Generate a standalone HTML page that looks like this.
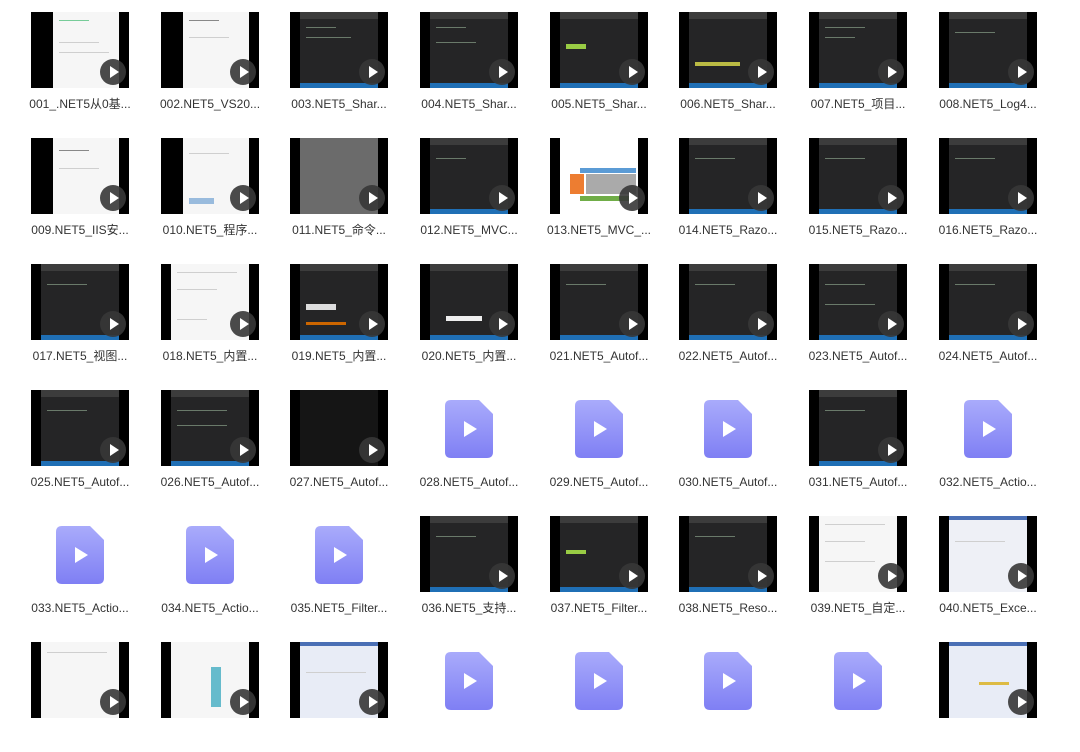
<!DOCTYPE html>
<html><head><meta charset="utf-8"><style>
body{margin:0;width:1080px;height:709px;background:#fff;overflow:hidden;position:relative;font-family:"Liberation Sans","Noto Sans CJK SC",sans-serif}
.c{position:absolute;width:98px;height:110px}
.t{position:absolute;left:0;top:0;width:98px;height:76px;background:#000;overflow:hidden}
.t .in{position:absolute;top:0;bottom:0;left:10px;right:10px}
.d .in{background:#252526}
.d .in:before{content:"";position:absolute;left:0;right:0;top:0;height:7px;background:#3c3c3c}
.d .in:after{content:"";position:absolute;left:0;right:0;bottom:0;height:5px;background:#1f6fb5}
.d .ln{position:absolute;left:6px;height:1px;background:#6a7a6a}
.l .in{background:#f6f6f6;left:22px}
.l .ln{position:absolute;left:6px;height:1px;background:#cfcfcf}
.g .in{background:#6b6b6b}
.k .in{background:#151515}
.p{position:absolute;left:69px;top:47px;width:26px;height:26px;border-radius:50%;background:rgba(55,55,55,.9)}
.p:after{content:"";position:absolute;left:10px;top:7px;border-left:9px solid #fff;border-top:6px solid transparent;border-bottom:6px solid transparent}
.i{position:absolute;left:25px;top:10px;width:48px;height:58px}
.lb{position:absolute;left:-20px;width:138px;top:84px;text-align:center;font-size:12px;color:#333;line-height:16px;white-space:nowrap}
</style></head><body>
<svg width="0" height="0" style="position:absolute"><defs><linearGradient id="gr" x1="0" y1="0" x2="0" y2="1"><stop offset="0" stop-color="#a9abfb"/><stop offset="1" stop-color="#7f7ff4"/></linearGradient></defs></svg>

<!-- row 1 -->
<div class="c" style="left:31px;top:12px"><div class="t l"><div class="in"><div class="ln" style="top:8px;width:30px;background:#7c9"></div><div class="ln" style="top:30px;width:40px"></div><div class="ln" style="top:40px;width:50px"></div></div><div class="p"></div></div><div class="lb">001_.NET5从0基...</div></div>
<div class="c" style="left:161px;top:12px"><div class="t l"><div class="in"><div class="ln" style="top:8px;width:30px;background:#888"></div><div class="ln" style="top:25px;width:40px"></div></div><div class="p"></div></div><div class="lb">002.NET5_VS20...</div></div>
<div class="c" style="left:290px;top:12px"><div class="t d"><div class="in"><div class="ln" style="top:15px;width:30px"></div><div class="ln" style="top:25px;width:45px"></div></div><div class="p"></div></div><div class="lb">003.NET5_Shar...</div></div>
<div class="c" style="left:420px;top:12px"><div class="t d"><div class="in"><div class="ln" style="top:15px;width:30px"></div><div class="ln" style="top:30px;width:40px"></div></div><div class="p"></div></div><div class="lb">004.NET5_Shar...</div></div>
<div class="c" style="left:550px;top:12px"><div class="t d"><div class="in"><div class="ln" style="top:32px;width:20px;height:5px;background:#9c4"></div></div><div class="p"></div></div><div class="lb">005.NET5_Shar...</div></div>
<div class="c" style="left:679px;top:12px"><div class="t d"><div class="in"><div class="ln" style="top:50px;width:45px;height:4px;background:#bb4"></div></div><div class="p"></div></div><div class="lb">006.NET5_Shar...</div></div>
<div class="c" style="left:809px;top:12px"><div class="t d"><div class="in"><div class="ln" style="top:15px;width:40px"></div><div class="ln" style="top:25px;width:30px"></div></div><div class="p"></div></div><div class="lb">007.NET5_项目...</div></div>
<div class="c" style="left:939px;top:12px"><div class="t d"><div class="in"><div class="ln" style="top:20px;width:40px"></div></div><div class="p"></div></div><div class="lb">008.NET5_Log4...</div></div>

<!-- row 2 -->
<div class="c" style="left:31px;top:138px"><div class="t l"><div class="in"><div class="ln" style="top:12px;width:30px;background:#888"></div><div class="ln" style="top:30px;width:40px"></div></div><div class="p"></div></div><div class="lb">009.NET5_IIS安...</div></div>
<div class="c" style="left:161px;top:138px"><div class="t l"><div class="in"><div class="ln" style="top:15px;width:40px"></div><div class="ln" style="top:60px;width:25px;height:6px;background:#9bd"></div></div><div class="p"></div></div><div class="lb">010.NET5_程序...</div></div>
<div class="c" style="left:290px;top:138px"><div class="t g"><div class="in"></div><div class="p"></div></div><div class="lb">011.NET5_命令...</div></div>
<div class="c" style="left:420px;top:138px"><div class="t d"><div class="in"><div class="ln" style="top:20px;width:30px"></div></div><div class="p"></div></div><div class="lb">012.NET5_MVC...</div></div>
<div class="c" style="left:550px;top:138px"><div class="t l"><div class="in" style="left:10px;background:#fff"><div class="ln" style="top:30px;left:20px;width:56px;height:5px;background:#5b9bd5"></div><div class="ln" style="top:36px;left:10px;width:14px;height:20px;background:#ed7d31"></div><div class="ln" style="top:36px;left:26px;width:50px;height:20px;background:#aaa"></div><div class="ln" style="top:58px;left:20px;width:56px;height:5px;background:#70ad47"></div></div><div class="p"></div></div><div class="lb">013.NET5_MVC_...</div></div>
<div class="c" style="left:679px;top:138px"><div class="t d"><div class="in"><div class="ln" style="top:20px;width:40px"></div></div><div class="p"></div></div><div class="lb">014.NET5_Razo...</div></div>
<div class="c" style="left:809px;top:138px"><div class="t d"><div class="in"><div class="ln" style="top:20px;width:40px"></div></div><div class="p"></div></div><div class="lb">015.NET5_Razo...</div></div>
<div class="c" style="left:939px;top:138px"><div class="t d"><div class="in"><div class="ln" style="top:20px;width:40px"></div></div><div class="p"></div></div><div class="lb">016.NET5_Razo...</div></div>

<!-- row 3 -->
<div class="c" style="left:31px;top:264px"><div class="t d"><div class="in"><div class="ln" style="top:20px;width:40px"></div></div><div class="p"></div></div><div class="lb">017.NET5_视图...</div></div>
<div class="c" style="left:161px;top:264px"><div class="t l"><div class="in" style="left:10px"><div class="ln" style="top:8px;width:60px"></div><div class="ln" style="top:25px;width:40px"></div><div class="ln" style="top:55px;width:30px"></div></div><div class="p"></div></div><div class="lb">018.NET5_内置...</div></div>
<div class="c" style="left:290px;top:264px"><div class="t d"><div class="in"><div class="ln" style="top:40px;width:30px;height:6px;background:#ddd"></div><div class="ln" style="top:58px;width:40px;height:3px;background:#c60"></div></div><div class="p"></div></div><div class="lb">019.NET5_内置...</div></div>
<div class="c" style="left:420px;top:264px"><div class="t d"><div class="in"><div class="ln" style="top:52px;left:16px;width:36px;height:5px;background:#eee"></div></div><div class="p"></div></div><div class="lb">020.NET5_内置...</div></div>
<div class="c" style="left:550px;top:264px"><div class="t d"><div class="in"><div class="ln" style="top:20px;width:40px"></div></div><div class="p"></div></div><div class="lb">021.NET5_Autof...</div></div>
<div class="c" style="left:679px;top:264px"><div class="t d"><div class="in"><div class="ln" style="top:20px;width:40px"></div></div><div class="p"></div></div><div class="lb">022.NET5_Autof...</div></div>
<div class="c" style="left:809px;top:264px"><div class="t d"><div class="in"><div class="ln" style="top:20px;width:40px"></div><div class="ln" style="top:40px;width:50px"></div></div><div class="p"></div></div><div class="lb">023.NET5_Autof...</div></div>
<div class="c" style="left:939px;top:264px"><div class="t d"><div class="in"><div class="ln" style="top:20px;width:40px"></div></div><div class="p"></div></div><div class="lb">024.NET5_Autof...</div></div>

<!-- row 4 -->
<div class="c" style="left:31px;top:390px"><div class="t d"><div class="in"><div class="ln" style="top:20px;width:40px"></div></div><div class="p"></div></div><div class="lb">025.NET5_Autof...</div></div>
<div class="c" style="left:161px;top:390px"><div class="t d"><div class="in"><div class="ln" style="top:20px;width:50px"></div><div class="ln" style="top:35px;width:50px"></div></div><div class="p"></div></div><div class="lb">026.NET5_Autof...</div></div>
<div class="c" style="left:290px;top:390px"><div class="t k"><div class="in"></div><div class="p"></div></div><div class="lb">027.NET5_Autof...</div></div>
<div class="c" style="left:420px;top:390px"><svg class="i" viewBox="0 0 48 58"><path d="M6 0H34L48 14V52Q48 58 42 58H6Q0 58 0 52V6Q0 0 6 0Z" fill="url(#gr)"/><path d="M19 21L32 29L19 37Z" fill="#fff"/></svg><div class="lb">028.NET5_Autof...</div></div>
<div class="c" style="left:550px;top:390px"><svg class="i" viewBox="0 0 48 58"><path d="M6 0H34L48 14V52Q48 58 42 58H6Q0 58 0 52V6Q0 0 6 0Z" fill="url(#gr)"/><path d="M19 21L32 29L19 37Z" fill="#fff"/></svg><div class="lb">029.NET5_Autof...</div></div>
<div class="c" style="left:679px;top:390px"><svg class="i" viewBox="0 0 48 58"><path d="M6 0H34L48 14V52Q48 58 42 58H6Q0 58 0 52V6Q0 0 6 0Z" fill="url(#gr)"/><path d="M19 21L32 29L19 37Z" fill="#fff"/></svg><div class="lb">030.NET5_Autof...</div></div>
<div class="c" style="left:809px;top:390px"><div class="t d"><div class="in"><div class="ln" style="top:20px;width:40px"></div></div><div class="p"></div></div><div class="lb">031.NET5_Autof...</div></div>
<div class="c" style="left:939px;top:390px"><svg class="i" viewBox="0 0 48 58"><path d="M6 0H34L48 14V52Q48 58 42 58H6Q0 58 0 52V6Q0 0 6 0Z" fill="url(#gr)"/><path d="M19 21L32 29L19 37Z" fill="#fff"/></svg><div class="lb">032.NET5_Actio...</div></div>

<!-- row 5 -->
<div class="c" style="left:31px;top:516px"><svg class="i" viewBox="0 0 48 58"><path d="M6 0H34L48 14V52Q48 58 42 58H6Q0 58 0 52V6Q0 0 6 0Z" fill="url(#gr)"/><path d="M19 21L32 29L19 37Z" fill="#fff"/></svg><div class="lb">033.NET5_Actio...</div></div>
<div class="c" style="left:161px;top:516px"><svg class="i" viewBox="0 0 48 58"><path d="M6 0H34L48 14V52Q48 58 42 58H6Q0 58 0 52V6Q0 0 6 0Z" fill="url(#gr)"/><path d="M19 21L32 29L19 37Z" fill="#fff"/></svg><div class="lb">034.NET5_Actio...</div></div>
<div class="c" style="left:290px;top:516px"><svg class="i" viewBox="0 0 48 58"><path d="M6 0H34L48 14V52Q48 58 42 58H6Q0 58 0 52V6Q0 0 6 0Z" fill="url(#gr)"/><path d="M19 21L32 29L19 37Z" fill="#fff"/></svg><div class="lb">035.NET5_Filter...</div></div>
<div class="c" style="left:420px;top:516px"><div class="t d"><div class="in"><div class="ln" style="top:20px;width:40px"></div></div><div class="p"></div></div><div class="lb">036.NET5_支持...</div></div>
<div class="c" style="left:550px;top:516px"><div class="t d"><div class="in"><div class="ln" style="top:34px;width:20px;height:4px;background:#9c4"></div></div><div class="p"></div></div><div class="lb">037.NET5_Filter...</div></div>
<div class="c" style="left:679px;top:516px"><div class="t d"><div class="in"><div class="ln" style="top:20px;width:40px"></div></div><div class="p"></div></div><div class="lb">038.NET5_Reso...</div></div>
<div class="c" style="left:809px;top:516px"><div class="t l"><div class="in" style="left:10px"><div class="ln" style="top:8px;width:60px"></div><div class="ln" style="top:25px;width:40px"></div><div class="ln" style="top:45px;width:50px"></div></div><div class="p"></div></div><div class="lb">039.NET5_自定...</div></div>
<div class="c" style="left:939px;top:516px"><div class="t l"><div class="in" style="left:10px;background:#eef0f6"><div class="ln" style="top:0;left:0;width:78px;height:4px;background:#4a6fb5"></div><div class="ln" style="top:25px;width:50px"></div></div><div class="p"></div></div><div class="lb">040.NET5_Exce...</div></div>

<!-- row 6 -->
<div class="c" style="left:31px;top:642px"><div class="t l"><div class="in" style="left:10px"><div class="ln" style="top:10px;width:60px"></div></div><div class="p"></div></div></div>
<div class="c" style="left:161px;top:642px"><div class="t l"><div class="in" style="left:10px"><div class="ln" style="top:25px;left:40px;width:10px;height:40px;background:#6bc"></div></div><div class="p"></div></div></div>
<div class="c" style="left:290px;top:642px"><div class="t l"><div class="in" style="left:10px;background:#e8ecf6"><div class="ln" style="top:0;left:0;width:78px;height:4px;background:#4a6fb5"></div><div class="ln" style="top:30px;width:60px"></div></div><div class="p"></div></div></div>
<div class="c" style="left:420px;top:642px"><svg class="i" viewBox="0 0 48 58"><path d="M6 0H34L48 14V52Q48 58 42 58H6Q0 58 0 52V6Q0 0 6 0Z" fill="url(#gr)"/><path d="M19 21L32 29L19 37Z" fill="#fff"/></svg></div>
<div class="c" style="left:550px;top:642px"><svg class="i" viewBox="0 0 48 58"><path d="M6 0H34L48 14V52Q48 58 42 58H6Q0 58 0 52V6Q0 0 6 0Z" fill="url(#gr)"/><path d="M19 21L32 29L19 37Z" fill="#fff"/></svg></div>
<div class="c" style="left:679px;top:642px"><svg class="i" viewBox="0 0 48 58"><path d="M6 0H34L48 14V52Q48 58 42 58H6Q0 58 0 52V6Q0 0 6 0Z" fill="url(#gr)"/><path d="M19 21L32 29L19 37Z" fill="#fff"/></svg></div>
<div class="c" style="left:809px;top:642px"><svg class="i" viewBox="0 0 48 58"><path d="M6 0H34L48 14V52Q48 58 42 58H6Q0 58 0 52V6Q0 0 6 0Z" fill="url(#gr)"/><path d="M19 21L32 29L19 37Z" fill="#fff"/></svg></div>
<div class="c" style="left:939px;top:642px"><div class="t l"><div class="in" style="left:10px;background:#e8ecf6"><div class="ln" style="top:0;left:0;width:78px;height:4px;background:#4a6fb5"></div><div class="ln" style="top:40px;left:30px;width:30px;height:3px;background:#db4"></div></div><div class="p"></div></div></div>
</body></html>
